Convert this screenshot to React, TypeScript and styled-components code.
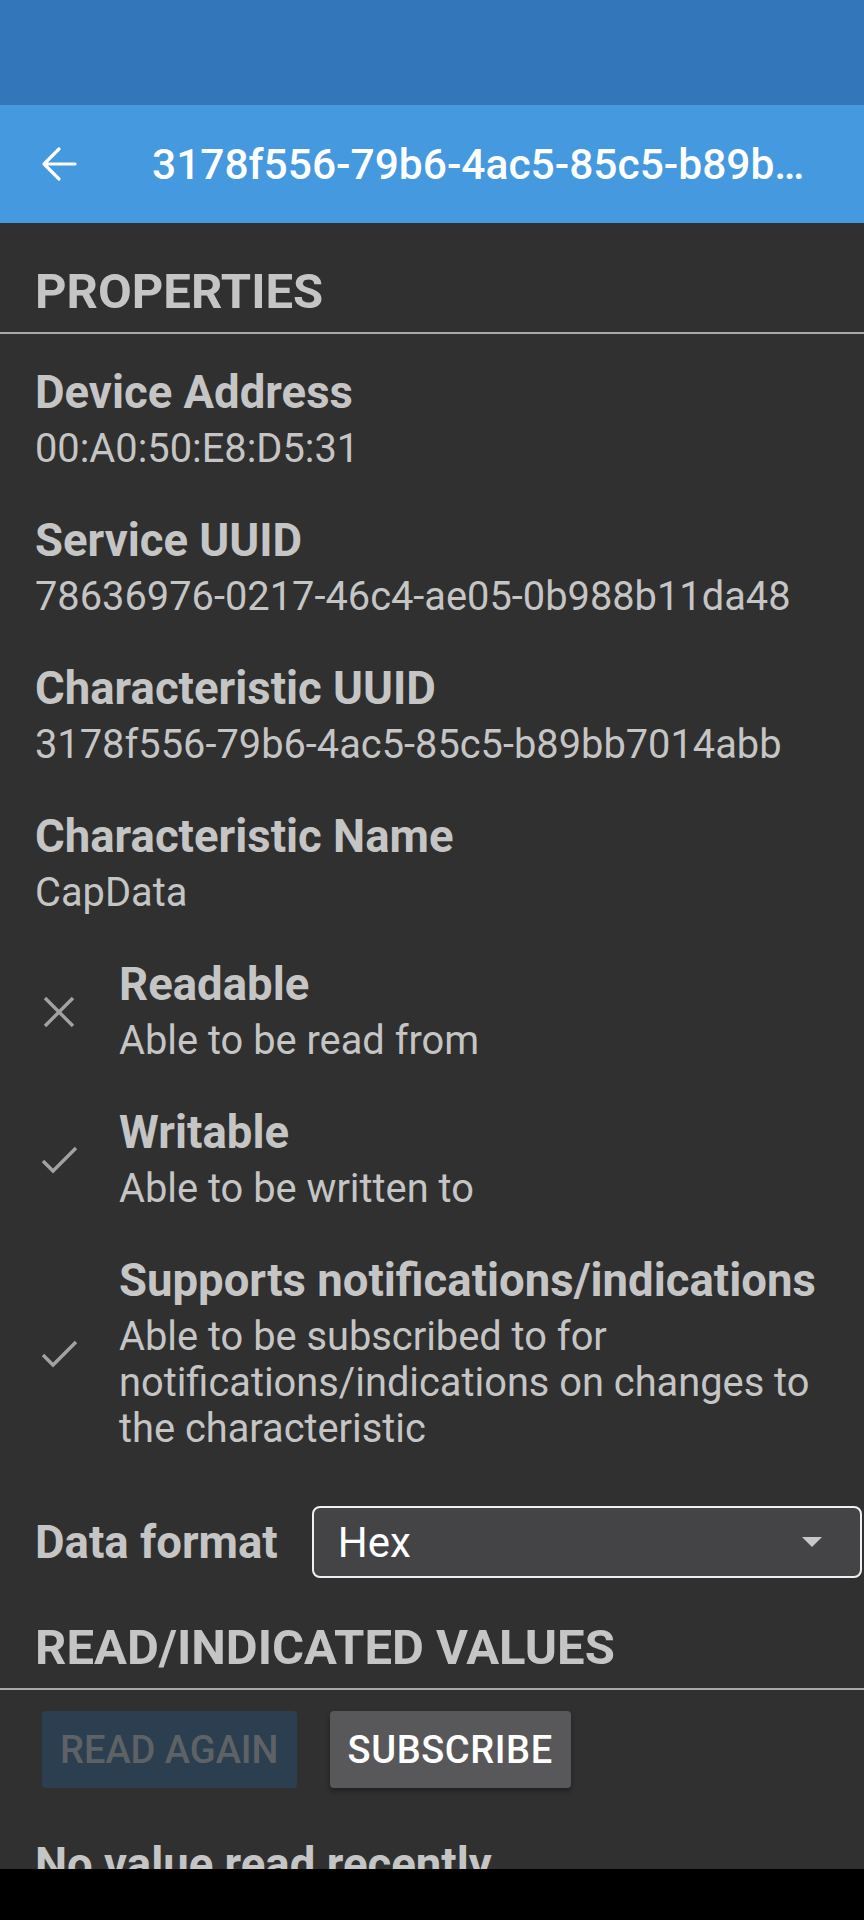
import styled, { createGlobalStyle } from 'styled-components';

const GlobalStyle = createGlobalStyle`
  html, body {
    margin: 0;
    padding: 0;
    background: #000;
  }
  body {
    font-family: Roboto, 'Noto Sans', sans-serif;
  }
`;

const fields = [
  { label: 'Device Address', value: '00:A0:50:E8:D5:31' },
  { label: 'Service UUID', value: '78636976-0217-46c4-ae05-0b988b11da48' },
  { label: 'Characteristic UUID', value: '3178f556-79b6-4ac5-85c5-b89bb7014abb' },
  { label: 'Characteristic Name', value: 'CapData' },
];

const capabilities = [
  { title: 'Readable', text: 'Able to be read from', ok: false },
  { title: 'Writable', text: 'Able to be written to', ok: true },
  {
    title: 'Supports notifications/indications',
    text: 'Able to be subscribed to for notifications/indications on changes to the characteristic',
    ok: true,
  },
];

const BackIcon = () => (
  <svg width="38" height="36" viewBox="0 0 38 36" fill="none">
    <path d="M35 18H4M19 3L4 18l15 15" stroke="#fff" strokeWidth="3.2" strokeLinecap="round" strokeLinejoin="round" />
  </svg>
);

const CapIcon = ({ ok }: { ok: boolean }) => (
  <svg width="48" height="48" viewBox="0 0 48 48" fill="none">
    {ok ? (
      <path d="M8 25l10 10L41 12" stroke="#a2a2a2" strokeWidth="3.4" />
    ) : (
      <path d="M10 10l28 28M38 10L10 38" stroke="#a2a2a2" strokeWidth="3.4" />
    )}
  </svg>
);

export default function App() {
  return (
    <>
      <GlobalStyle />
      <Screen>
        <StatusBar />
        <AppBar>
          <BackButton aria-label="Back">
            <BackIcon />
          </BackButton>
          <Title>3178f556-79b6-4ac5-85c5-b89bb7014abb</Title>
        </AppBar>
        <Content>
          <SectionTitle $top={41}>PROPERTIES</SectionTitle>
          <Divider />
          <List>
            {fields.map((f) => (
              <Field key={f.label}>
                <FieldLabel>{f.label}</FieldLabel>
                <FieldValue>{f.value}</FieldValue>
              </Field>
            ))}
            {capabilities.map((c) => (
              <Capability key={c.title}>
                <IconBox>
                  <CapIcon ok={c.ok} />
                </IconBox>
                <Field>
                  <FieldLabel>{c.title}</FieldLabel>
                  <FieldValue>{c.text}</FieldValue>
                </Field>
              </Capability>
            ))}
          </List>
          <FormatRow>
            <FormatLabel>Data format</FormatLabel>
            <Select>
              <span>Hex</span>
              <svg width="20" height="10" viewBox="0 0 20 10">
                <path d="M0 0h20L10 10z" fill="#c8c8c8" />
              </svg>
            </Select>
          </FormatRow>
          <SectionTitle $top={42}>READ/INDICATED VALUES</SectionTitle>
          <Divider />
          <ButtonRow>
            <ActionButton disabled>READ AGAIN</ActionButton>
            <ActionButton $raised>SUBSCRIBE</ActionButton>
          </ButtonRow>
          <EmptyNote>No value read recently</EmptyNote>
        </Content>
        <NavBar />
      </Screen>
    </>
  );
}

const Screen = styled.div`
  width: 864px;
  height: 1920px;
  display: flex;
  flex-direction: column;
  overflow: hidden;
  background: #303030;
`;

const StatusBar = styled.div`
  flex: none;
  height: 105px;
  background: #3476ba;
`;

const AppBar = styled.header`
  flex: none;
  box-sizing: border-box;
  height: 118px;
  display: flex;
  align-items: center;
  padding: 0 52px 0 40px;
  background: #4599df;
`;

const BackButton = styled.button`
  display: flex;
  padding: 0;
  border: 0;
  background: none;
`;

const Title = styled.h1`
  flex: 1;
  min-width: 0;
  margin: 0 0 0 74px;
  font-size: 42.5px;
  font-weight: 500;
  color: #fff;
  white-space: nowrap;
  overflow: hidden;
  text-overflow: ellipsis;
`;

const Content = styled.main`
  flex: 1;
  min-height: 0;
  overflow: hidden;
  color: #c5c5c5;
`;

const SectionTitle = styled.h2<{ $top: number }>`
  margin: 0;
  padding: ${(p) => p.$top}px 35px 12px;
  font-size: 49px;
  line-height: 56px;
  font-weight: 700;
`;

const Divider = styled.hr`
  margin: 0;
  height: 2px;
  border: 0;
  background: #a9a9a9;
`;

const List = styled.div`
  display: flex;
  flex-direction: column;
  gap: 43px;
  padding: 33px 35px 0;
`;

const Field = styled.div`
  display: flex;
  flex-direction: column;
  gap: 7px;
`;

const FieldLabel = styled.div`
  font-size: 45.5px;
  line-height: 52px;
  font-weight: 700;
`;

const FieldValue = styled.div`
  font-size: 39.8px;
  line-height: 46px;
`;

const Capability = styled.div`
  display: flex;
  align-items: center;
`;

const IconBox = styled.div`
  flex: none;
  display: flex;
  width: 48px;
  margin-right: 36px;
`;

const FormatRow = styled.div`
  display: flex;
  align-items: center;
  margin-top: 54px;
  padding: 0 2px 0 35px;
`;

const FormatLabel = styled.div`
  font-size: 45.5px;
  font-weight: 700;
  margin-right: 34px;
`;

const Select = styled.div`
  flex: 1;
  box-sizing: border-box;
  height: 72px;
  display: flex;
  align-items: center;
  justify-content: space-between;
  padding: 0 38px 0 24px;
  border: 2px solid #f0f0f0;
  border-radius: 8px;
  background: #444446;
  color: #fff;
  font-size: 42px;
`;

const ButtonRow = styled.div`
  display: flex;
  gap: 33px;
  padding: 21px 42px 0;
`;

const ActionButton = styled.button<{ $raised?: boolean }>`
  height: 77px;
  padding: 0 18px;
  border: 0;
  border-radius: 4px;
  font-family: Roboto, sans-serif;
  font-size: 38px;
  font-weight: 500;
  letter-spacing: ${(p) => (p.$raised ? '0.6px' : '0')};
  background: ${(p) => (p.$raised ? '#58585a' : '#2b3f50')};
  color: ${(p) => (p.$raised ? '#fff' : '#5e6266')};
  box-shadow: ${(p) => (p.$raised ? '0 3px 5px rgba(0,0,0,0.35)' : 'none')};
`;

const EmptyNote = styled.div`
  margin-top: 51px;
  padding: 0 35px;
  font-size: 45.5px;
  line-height: 52px;
  font-weight: 700;
`;

const NavBar = styled.div`
  flex: none;
  height: 51px;
  background: #000;
`;
